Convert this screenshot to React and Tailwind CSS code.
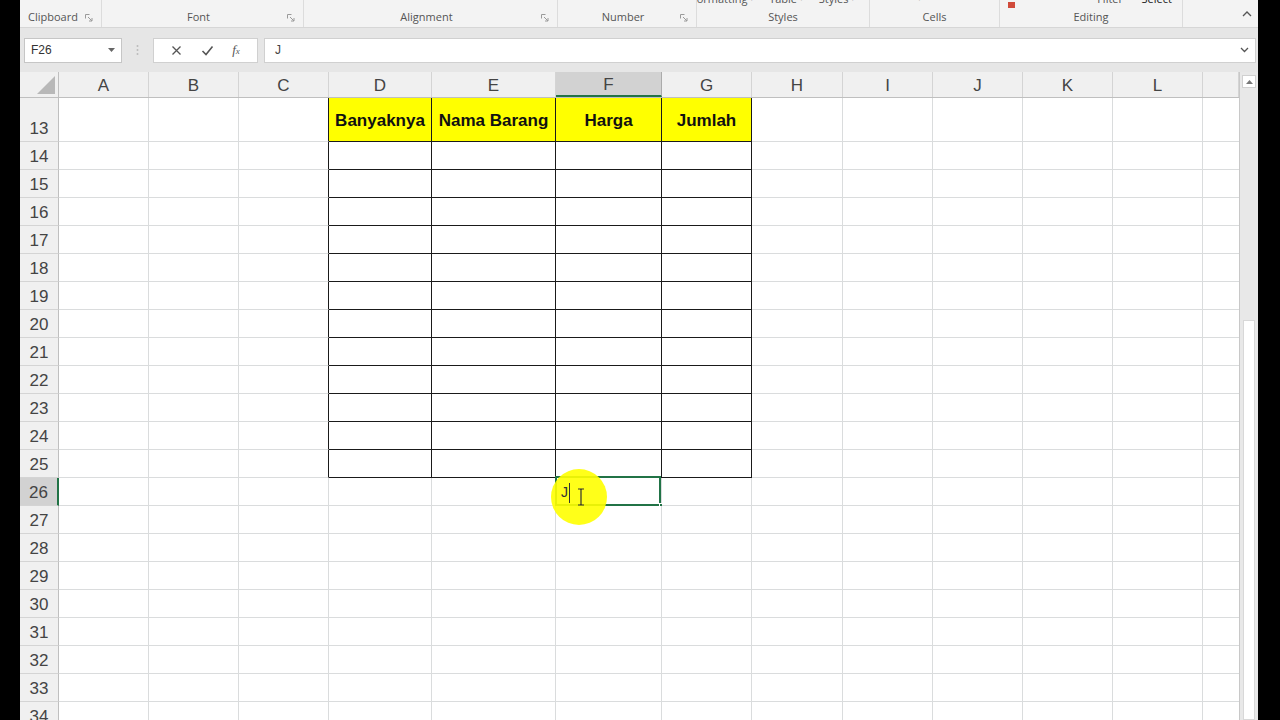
import React from "react";

const cols = [
  { l: "A", w: "w-[90px]" },
  { l: "B", w: "w-[90px]" },
  { l: "C", w: "w-[90px]" },
  { l: "D", w: "w-[103px]" },
  { l: "E", w: "w-[124px]" },
  { l: "F", w: "w-[106px]" },
  { l: "G", w: "w-[90px]" },
  { l: "H", w: "w-[91px]" },
  { l: "I", w: "w-[90px]" },
  { l: "J", w: "w-[90px]" },
  { l: "K", w: "w-[90px]" },
  { l: "L", w: "w-[90px]" },
  { l: "", w: "w-[36px]" },
];

const headers = { D: "Banyaknya", E: "Nama Barang", F: "Harga", G: "Jumlah" };
const rows = [];
for (let r = 13; r <= 34; r++) rows.push(r);

const inTable = (r) => r >= 13 && r <= 25;
const tableCols = ["D", "E", "F", "G"];

const Launcher = () => (
  <svg width="8" height="8" viewBox="0 0 8 8" className="text-[#9a9a9a]">
    <path d="M0.5 0.5h4M0.5 0.5v4M3 3l4 4M7 4v3H4" stroke="currentColor" fill="none" strokeWidth="1" />
  </svg>
);

const Group = ({ w, label, launcher, top, align = "center" }) => (
  <div className={`${w} shrink-0 h-full flex flex-col border-r border-[#dcdcdc]`}>
    <div className="h-[8px] overflow-hidden">
      <div className="-mt-[8px] flex items-center gap-[16px] px-[8px] text-[11px] leading-[14px] text-[#555]">
        {top}
      </div>
    </div>
    <div className="flex-1 flex items-center px-[8px] text-[11px] text-[#555]">
      <span className={align === "left" ? "" : "flex-1 text-center"}>{label}</span>
      {align === "left" && <span className="flex-1" />}
      {launcher && <Launcher />}
    </div>
  </div>
);

function Cell({ r, c, ci }) {
  const isT = inTable(r);
  const blackR = isT && (c.l === "C" || tableCols.includes(c.l));
  const blackB = isT && tableCols.includes(c.l);
  const isHead = r === 13 && tableCols.includes(c.l);
  const last = ci === cols.length - 1;
  const selected = r === 26 && c.l === "F";
  return (
    <div
      className={`${c.w} shrink-0 relative border-b ${last ? "border-r-0" : "border-r"} ${
        blackR ? "border-r-[#1a1a1a]" : "border-r-[#dadcdd]"
      } ${blackB ? "border-b-[#1a1a1a]" : "border-b-[#dadcdd]"} ${
        isHead ? "bg-[#ffff00]" : "bg-white"
      } flex items-center justify-center`}
    >
      {isHead && (
        <span className="font-bold text-[17px] text-[#111] whitespace-nowrap pt-[2px]">{headers[c.l]}</span>
      )}
      {selected && (
        <>
          <div className="absolute -top-[2px] -left-px right-0 -bottom-px border-2 border-[#217346]" />
          <div className="absolute -right-[3px] -bottom-[3px] w-[5px] h-[5px] bg-[#217346] border border-white" />
          <div className="absolute left-[-5px] top-[-9px] w-[56px] h-[56px] rounded-full bg-[#ffff00]/90 z-10" />
          <div className="absolute left-[5px] top-[4px] z-20 flex items-center text-[14px] text-[#333]">
            <span>J</span>
            <span className="ml-[1px] w-px h-[20px] bg-[#333]" />
          </div>
          <svg className="absolute left-[21px] top-[10px] z-20" width="8" height="18" viewBox="0 0 8 18">
            <path d="M1 1h2.5l0.5 1 0.5-1H7M4 2v14M1 17h2.5l0.5-1 0.5 1H7" stroke="#333" fill="none" strokeWidth="1.2" />
          </svg>
        </>
      )}
    </div>
  );
}

export default function App() {
  return (
    <div className="w-[1280px] h-[720px] overflow-hidden flex bg-black" style={{ fontFamily: '"Liberation Sans", Arial, sans-serif' }}>
      <div className="w-[20px] shrink-0 bg-black" />
      <div className="w-[1238px] shrink-0 flex flex-col bg-[#e6e6e6]">
        {/* ribbon bottom */}
        <div
          className="h-[28px] shrink-0 flex bg-[#f3f3f3] border-b border-[#d6d6d6]"
          style={{ fontFamily: '"Open Sans", "Noto Sans", sans-serif' }}
        >
          <Group w="w-[82px]" label="Clipboard" launcher align="left" />
          <Group w="w-[202px]" label="Font" launcher />
          <Group w="w-[254px]" label="Alignment" launcher />
          <Group w="w-[139px]" label="Number" launcher />
          <Group
            w="w-[173px]"
            label="Styles"
            top={
              <>
                <span className="-ml-[14px]">Formatting ·</span>
                <span>Table ·</span>
                <span>Styles ·</span>
              </>
            }
          />
          <Group w="w-[130px]" label="Cells" top={<span className="ml-[40px]">·</span>} />
          <Group
            w="w-[183px]"
            label="Editing"
            top={
              <>
                <span className="w-[8px] h-[8px] bg-[#d04a3a]" />
                <span className="ml-[66px]">Filter ·</span>
                <span className="text-[#222]">Select ·</span>
              </>
            }
          />
          <div className="flex-1 flex items-center justify-end pr-[6px]">
            <svg width="10" height="6" viewBox="0 0 10 6">
              <path d="M1 5l4-4 4 4" stroke="#555" strokeWidth="1.3" fill="none" />
            </svg>
          </div>
        </div>

        {/* formula bar */}
        <div className="h-[44px] shrink-0 flex items-center pl-[4px] pr-[2px] gap-0 bg-[#e6e6e6]">
          <div className="w-[98px] h-[25px] bg-white border border-[#c6c6c6] flex items-center pl-[6px] pr-[6px] text-[12px] text-[#333]">
            <span className="flex-1">F26</span>
            <svg width="7" height="4" viewBox="0 0 7 4">
              <path d="M0 0h7L3.5 4z" fill="#666" />
            </svg>
          </div>
          <div className="w-[31px] flex justify-center">
            <svg width="3" height="12" viewBox="0 0 3 12">
              <circle cx="1.5" cy="2" r="1" fill="#bbb" />
              <circle cx="1.5" cy="6" r="1" fill="#bbb" />
              <circle cx="1.5" cy="10" r="1" fill="#bbb" />
            </svg>
          </div>
          <div className="w-[105px] h-[25px] bg-white border border-[#d0d0d0] flex items-center justify-around px-[8px] text-[#555]">
            <svg width="11" height="11" viewBox="0 0 11 11">
              <path d="M1.5 1.5l8 8M9.5 1.5l-8 8" stroke="#555" strokeWidth="1.3" />
            </svg>
            <svg width="13" height="11" viewBox="0 0 13 11">
              <path d="M1.5 6l3.5 3.5 6.5-8" stroke="#555" strokeWidth="1.6" fill="none" />
            </svg>
            <span className="italic text-[13px]" style={{ fontFamily: '"Liberation Serif", serif' }}>
              f<span className="text-[9px]">x</span>
            </span>
          </div>
          <div className="ml-[6px] flex-1 h-[25px] bg-white border border-[#d0d0d0] flex items-center pl-[10px] pr-[6px] text-[12px] text-[#444]">
            <span className="flex-1 font-light">J</span>
            <svg width="9" height="6" viewBox="0 0 9 6">
              <path d="M1 1l3.5 3.5L8 1" stroke="#555" strokeWidth="1.3" fill="none" />
            </svg>
          </div>
        </div>

        {/* sheet */}
        <div className="flex-1 flex overflow-hidden">
          <div className="w-[1219px] shrink-0 flex flex-col bg-white">
            {/* column headers */}
            <div className="h-[26px] shrink-0 flex bg-[#f0f0f0] border-b border-[#bfbfbf]">
              <div className="w-[39px] shrink-0 border-r border-[#bfbfbf] relative flex items-end justify-end p-[3px]">
                <svg width="18" height="18" viewBox="0 0 18 18">
                  <path d="M18 0v18H0z" fill="#b8b8b8" />
                </svg>
              </div>
              {cols.map((c) => (
                <div
                  key={c.l || "m"}
                  className={`${c.w} shrink-0 flex items-center justify-center pt-[2px] text-[17px] text-[#444] ${
                    c.l === "F" ? "bg-[#d2d2d2] border-b-2 border-b-[#217346] border-r border-r-[#ababab]" : "border-r border-r-[#d4d4d4]"
                  }`}
                >
                  {c.l}
                </div>
              ))}
            </div>
            {rows.map((r) => (
              <div key={r} className={`${r === 13 ? "h-[44px]" : "h-[28px]"} shrink-0 flex`}>
                <div
                  className={`w-[39px] shrink-0 flex items-end justify-center pb-[2px] leading-[20px] text-[17px] text-[#444] border-b border-b-[#d4d4d4] ${
                    r === 26 ? "bg-[#d2d2d2] border-r-2 border-r-[#217346]" : "bg-[#f0f0f0] border-r border-r-[#bfbfbf]"
                  }`}
                >
                  {r}
                </div>
                {cols.map((c, ci) => (
                  <Cell key={ci} r={r} c={c} ci={ci} />
                ))}
              </div>
            ))}
          </div>

          {/* vertical scrollbar */}
          <div className="w-[19px] shrink-0 flex flex-col bg-[#e8e8e8] border-l border-[#c8c8c8]">
            <div className="h-[26px] shrink-0 flex justify-center pt-[3px]">
              <div className="w-[14px] h-[13px] bg-white border border-[#d0d0d0] flex items-center justify-center">
                <svg width="7" height="4" viewBox="0 0 7 4">
                  <path d="M0 4h7L3.5 0z" fill="#777" />
                </svg>
              </div>
            </div>
            <div className="h-[222px] shrink-0" />
            <div className="flex-1 mx-[3px] bg-white border border-[#d8d8d8]" />
          </div>
        </div>
      </div>
      <div className="flex-1 bg-black" />
    </div>
  );
}
